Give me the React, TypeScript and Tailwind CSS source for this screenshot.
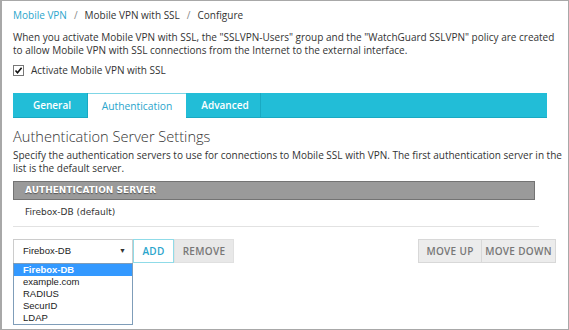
import { useState } from "react";

const servers = ["Firebox-DB", "example.com", "RADIUS", "SecurID", "LDAP"];

export default function App() {
  const [active] = useState("Authentication");
  const [checked, setChecked] = useState(true);

  return (
    <div className="w-[569px] h-[330px] overflow-hidden bg-white border border-[#a8a8a8] border-l-2 font-['Open_Sans',sans-serif] text-[#333]">
      <div className="pl-[11px] pr-3">
        {/* Breadcrumb */}
        <div className="flex items-center gap-[7px] pt-[6px] text-[10px] leading-[16px]">
          <span className="text-[#2aa5cc]">Mobile VPN</span>
          <span className="text-[#888]">/</span>
          <span>Mobile VPN with SSL</span>
          <span className="text-[#888]">/</span>
          <span>Configure</span>
        </div>

        <p className="mt-[8px] text-[10px] leading-[13px] w-[545px]">
          When you activate Mobile VPN with SSL, the "SSLVPN-Users" group and the "WatchGuard SSLVPN" policy are created to allow Mobile VPN with SSL connections from the Internet to the external interface.
        </p>

        <label
          className="flex items-center gap-[7px] mt-[7px] text-[10px] leading-[13px]"
          onClick={() => setChecked(!checked)}
        >
          <span className="w-[11px] h-[11px] border border-[#777] bg-white flex items-center justify-center">
            {checked && (
              <svg width="9" height="9" viewBox="0 0 9 9">
                <path d="M1.5 4.5 L3.5 6.8 L7.6 1.8" fill="none" stroke="#111" strokeWidth="1.6" />
              </svg>
            )}
          </span>
          Activate Mobile VPN with SSL
        </label>

        {/* Tabs */}
        <div className="mt-[16px] flex h-[25px] w-[534px] bg-[#22bdd7] border-b border-[#1aa9c2]">
          {["General", "Authentication", "Advanced"].map((t) =>
            t === active ? (
              <div
                key={t}
                className="w-[98px] h-[26px] bg-white border-t border-[#7fd6e6] flex items-center justify-center text-[10.3px] text-[#2aa5cc]"
              >
                {t}
              </div>
            ) : (
              <div
                key={t}
                className="w-[75px] pl-[4px] flex items-center justify-center text-[10px] font-semibold text-white border-r border-[#1aa9c2]"
              >
                {t}
              </div>
            )
          )}
        </div>

        <h2 className="mt-[8px] text-[14.6px] leading-[20px] font-light text-[#333]">
          Authentication Server Settings
        </h2>
        <p className="mt-[3px] text-[10px] leading-[13px] w-[552px]">
          Specify the authentication servers to use for connections to Mobile SSL with VPN. The first authentication server in the list is the default server.
        </p>

        {/* Table */}
        <div className="mt-[6px] w-[522px] h-[19px] bg-[#9a9a9a] border border-[#737373] flex items-center pl-[11px]">
          <span className="font-['DejaVu_Sans',sans-serif] font-bold text-[9px] text-white [text-shadow:0_1px_1px_#555]">
            AUTHENTICATION SERVER
          </span>
        </div>
        <div className="w-[526px] h-[27px] border-b border-[#e2e2e2] flex items-center pl-[12px] font-['DejaVu_Sans',sans-serif] text-[9px] text-[#333]">
          Firebox-DB (default)
        </div>

        {/* Controls */}
        <div className="mt-[12px] flex items-start w-[543px]">
          <div className="flex flex-col">
            <div className="w-[120px] h-[24px] border border-[#ccc] border-b-0 flex items-center justify-between pl-[9px] pr-[6px] font-['Liberation_Sans',sans-serif] text-[9.5px] text-[#222]">
              <span>Firebox-DB</span>
              <span className="text-[7px] text-[#333]">▼</span>
            </div>
            <div className="w-[120px] border border-[#7f9db9] font-['Liberation_Sans',sans-serif] text-[9.5px] leading-[12px] text-[#222]">
              {servers.map((s, i) => (
                <div
                  key={s}
                  className={i === 0 ? "bg-[#3399ff] text-white font-bold pl-[9px]" : "pl-[9px]"}
                >
                  {s}
                </div>
              ))}
            </div>
          </div>
          <button className="w-[41px] h-[24px] border border-[#8fdbe8] bg-white text-[10px] font-semibold text-[#2aa5cc] tracking-[0.3px]">
            ADD
          </button>
          <button className="w-[60px] h-[24px] bg-[#e8e8e8] border border-[#e0e0e0] text-[10px] font-semibold text-[#777] tracking-[0.3px]">
            REMOVE
          </button>
          <div className="ml-auto flex">
            <button className="w-[64px] h-[24px] bg-[#ececec] border border-[#d8d8d8] text-[10px] font-semibold text-[#777] tracking-[0.3px]">
              MOVE UP
            </button>
            <button className="w-[74px] h-[24px] bg-[#ececec] border border-[#d8d8d8] border-l-0 text-[10px] font-semibold text-[#777] tracking-[0.3px]">
              MOVE DOWN
            </button>
          </div>
        </div>
      </div>
    </div>
  );
}
